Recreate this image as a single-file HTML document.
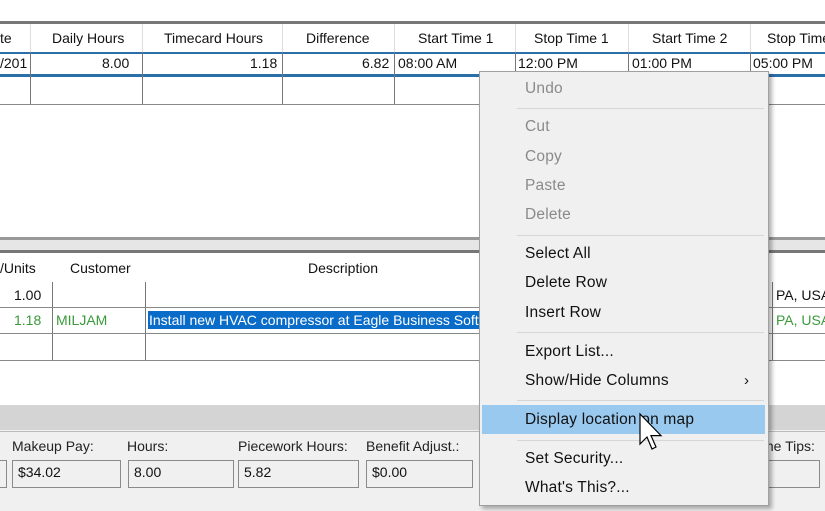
<!DOCTYPE html>
<html><head><style>
*{margin:0;padding:0;box-sizing:border-box}
body{width:825px;height:511px;overflow:hidden;background:#fff;font-family:"Liberation Sans",sans-serif;font-size:14px;color:#111;position:relative}
.a{position:absolute}
.t{position:absolute;white-space:nowrap}
.vl{position:absolute;width:1px;background:#777}
.hl{position:absolute;height:1px;background:#888}
.mi{position:absolute;left:525px;font-size:15.5px;color:#111;white-space:nowrap;letter-spacing:0.2px}
.dis{color:#8a8a8a}
.sep{position:absolute;left:517px;width:247px;height:1px;background:#d6d6d6}
.inp{position:absolute;top:460px;height:28px;border:1px solid #8a8a8a;background:#f0f0f0;padding:3px 5px;font-size:14px}
.lab{position:absolute;top:438px;font-size:14px;color:#222}
</style></head><body>
<div class="a" style="left:0;top:21px;width:825px;height:3px;background:#777"></div>
<div class="t" style="left:0;top:30px">te</div>
<div class="t" style="left:52px;top:30px">Daily Hours</div>
<div class="t" style="left:164px;top:30px">Timecard Hours</div>
<div class="t" style="left:306px;top:30px">Difference</div>
<div class="t" style="left:418px;top:30px">Start Time 1</div>
<div class="t" style="left:534px;top:30px">Stop Time 1</div>
<div class="t" style="left:652px;top:30px">Start Time 2</div>
<div class="t" style="left:767px;top:30px">Stop Time</div>
<div class="vl" style="left:30px;top:24px;height:28px;background:#ddd"></div>
<div class="vl" style="left:142px;top:24px;height:28px;background:#ddd"></div>
<div class="vl" style="left:282px;top:24px;height:28px;background:#ddd"></div>
<div class="vl" style="left:394px;top:24px;height:28px;background:#ddd"></div>
<div class="vl" style="left:515px;top:24px;height:28px;background:#ddd"></div>
<div class="vl" style="left:628px;top:24px;height:28px;background:#ddd"></div>
<div class="vl" style="left:750px;top:24px;height:28px;background:#ddd"></div>
<div class="a" style="left:0;top:52px;width:825px;height:2px;background:#2a6fa8"></div>
<div class="a" style="left:0;top:74px;width:825px;height:3px;background:#2a6fa8"></div>
<div class="t" style="left:0;top:55px">/201</div>
<div class="t" style="left:102px;top:55px">8.00</div>
<div class="t" style="left:250px;top:55px">1.18</div>
<div class="t" style="left:362px;top:55px">6.82</div>
<div class="t" style="left:398px;top:55px">08:00 AM</div>
<div class="t" style="left:518px;top:55px">12:00 PM</div>
<div class="t" style="left:632px;top:55px">01:00 PM</div>
<div class="t" style="left:753px;top:55px">05:00 PM</div>
<div class="vl" style="left:30px;top:52px;height:52px"></div>
<div class="vl" style="left:142px;top:52px;height:52px"></div>
<div class="vl" style="left:282px;top:52px;height:52px"></div>
<div class="vl" style="left:394px;top:52px;height:52px"></div>
<div class="vl" style="left:515px;top:52px;height:24px"></div>
<div class="vl" style="left:628px;top:52px;height:24px"></div>
<div class="vl" style="left:750px;top:52px;height:24px"></div>
<div class="hl" style="left:0;top:104px;width:825px"></div>
<div class="a" style="left:0;top:237px;width:825px;height:3px;background:#999"></div>
<div class="a" style="left:0;top:240px;width:825px;height:10px;background:#e6e6e6"></div>
<div class="a" style="left:0;top:250px;width:825px;height:3px;background:#777"></div>
<div class="t" style="left:0;top:260px">/Units</div>
<div class="t" style="left:70px;top:260px">Customer</div>
<div class="t" style="left:308px;top:260px">Description</div>
<div class="vl" style="left:52px;top:282px;height:78px"></div>
<div class="vl" style="left:145px;top:282px;height:78px"></div>
<div class="vl" style="left:772px;top:282px;height:78px"></div>
<div class="hl" style="left:0;top:307px;width:825px"></div>
<div class="hl" style="left:0;top:333px;width:825px"></div>
<div class="hl" style="left:0;top:360px;width:825px"></div>
<div class="t" style="left:14px;top:287px">1.00</div>
<div class="t" style="left:14px;top:312px;color:#3a9a3a">1.18</div>
<div class="t" style="left:56px;top:312px;color:#3a9a3a">MILJAM</div>
<div class="a" style="left:148px;top:311px;width:332px;height:18px;background:#0a6cc9"></div>
<div class="t" style="left:149px;top:312px;color:#fff;width:331px;overflow:hidden">Install new HVAC compressor at Eagle Business Software</div>
<div class="t" style="left:776px;top:287px">PA, USA</div>
<div class="t" style="left:776px;top:312px;color:#3a9a3a">PA, USA</div>
<div class="a" style="left:0;top:405px;width:825px;height:25px;background:#d4d4d4"></div>
<div class="a" style="left:0;top:430px;width:825px;height:81px;background:#f0f0f0"></div>
<div class="hl" style="left:0;top:431px;width:825px;background:#bbb"></div>
<div class="lab" style="left:12px">Makeup Pay:</div>
<div class="lab" style="left:127px">Hours:</div>
<div class="lab" style="left:238px">Piecework Hours:</div>
<div class="lab" style="left:366px">Benefit Adjust.:</div>
<div class="lab" style="left:762px">me Tips:</div>
<div class="inp" style="left:-5px;width:12px"></div>
<div class="inp" style="left:12px;width:109px">$34.02</div>
<div class="inp" style="left:128px;width:106px">8.00</div>
<div class="inp" style="left:238px;width:121px">5.82</div>
<div class="inp" style="left:366px;width:107px">$0.00</div>
<div class="inp" style="left:766px;width:54px"></div>
<div class="a" style="left:479px;top:71px;width:290px;height:435px;background:#f0f0f0;border:1px solid #a0a0a0;box-shadow:3px 3px 4px rgba(0,0,0,.3)"></div>
<div class="mi dis" style="top:80px">Undo</div>
<div class="sep" style="top:108px"></div>
<div class="mi dis" style="top:118px">Cut</div>
<div class="mi dis" style="top:148px">Copy</div>
<div class="mi dis" style="top:177px">Paste</div>
<div class="mi dis" style="top:206px">Delete</div>
<div class="sep" style="top:235px"></div>
<div class="mi" style="top:245px">Select All</div>
<div class="mi" style="top:274px">Delete Row</div>
<div class="mi" style="top:304px">Insert Row</div>
<div class="sep" style="top:332px"></div>
<div class="mi" style="top:343px">Export List...</div>
<div class="mi" style="top:372px">Show/Hide Columns</div>
<div class="t" style="left:744px;top:372px;font-size:15px">›</div>
<div class="sep" style="top:400px"></div>
<div class="a" style="left:482px;top:405px;width:283px;height:29px;background:#99c9ef"></div>
<div class="mi" style="top:411px">Display location on map</div>
<div class="sep" style="top:440px"></div>
<div class="mi" style="top:450px">Set Security...</div>
<div class="mi" style="top:479px">What's This?...</div>
<svg class="a" style="left:638px;top:412px" width="26" height="42" viewBox="0 0 13 21"><path d="M1 1 L1 16 L4.5 12.5 L7 18.5 L9 17.5 L6.5 11.8 L11.5 11.8 Z" fill="#fff" stroke="#000" stroke-width="0.6"/></svg>
</body></html>
